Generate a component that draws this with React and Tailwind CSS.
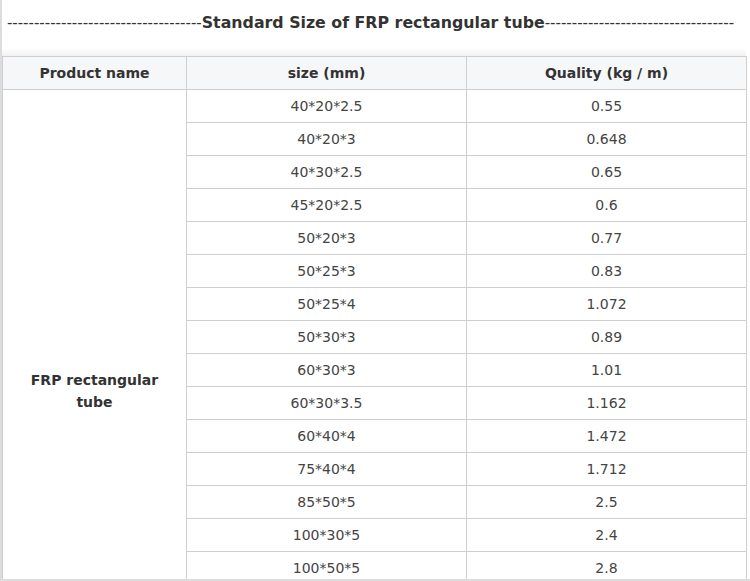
import React from 'react';

const rows = [
  ['40*20*2.5', '0.55'],
  ['40*20*3', '0.648'],
  ['40*30*2.5', '0.65'],
  ['45*20*2.5', '0.6'],
  ['50*20*3', '0.77'],
  ['50*25*3', '0.83'],
  ['50*25*4', '1.072'],
  ['50*30*3', '0.89'],
  ['60*30*3', '1.01'],
  ['60*30*3.5', '1.162'],
  ['60*40*4', '1.472'],
  ['75*40*4', '1.712'],
  ['85*50*5', '2.5'],
  ['100*30*5', '2.4'],
  ['100*50*5', '2.8'],
];

export default function App() {
  return (
    <div
      className="w-[750px] h-[581px] overflow-hidden bg-white border-l-2 border-b-2 border-[#dcdcdc] text-[#333]"
      style={{ fontFamily: '"DejaVu Sans", Verdana, sans-serif' }}
    >
      <div className="w-[737px] h-[48px] pt-[11px] text-center text-[15px] leading-[24px] whitespace-nowrap">
        <span>------------------------------------</span>
        <span className="font-bold text-[15.8px]">Standard Size of FRP rectangular tube</span>
        <span>-----------------------------------</span>
      </div>
      <div className="h-[8px] w-[744px] bg-gradient-to-b from-white to-[#f1f1f1]" />
      <table className="border-collapse w-[744px] table-fixed text-[14px] text-center">
        <colgroup>
          <col className="w-[184px]" />
          <col className="w-[280px]" />
          <col className="w-[280px]" />
        </colgroup>
        <thead>
          <tr className="bg-[#f6f7f9] h-[33px]">
            <th className="border border-[#cfcfcf] font-bold">Product name</th>
            <th className="border border-[#cfcfcf] font-bold">size (mm)</th>
            <th className="border border-[#cfcfcf] font-bold">Quality (kg / m)</th>
          </tr>
        </thead>
        <tbody>
          {rows.map((r, i) => (
            <tr key={i} className="h-[33px]">
              {i === 0 && (
                <td rowSpan={rows.length} className="border border-[#cfcfcf] font-bold leading-[22px] px-6 align-top pt-[279px]">
                  FRP rectangular tube
                </td>
              )}
              <td className="border border-[#cfcfcf] text-[#444]">{r[0]}</td>
              <td className="border border-[#cfcfcf] text-[#444]">{r[1]}</td>
            </tr>
          ))}
        </tbody>
      </table>
    </div>
  );
}
